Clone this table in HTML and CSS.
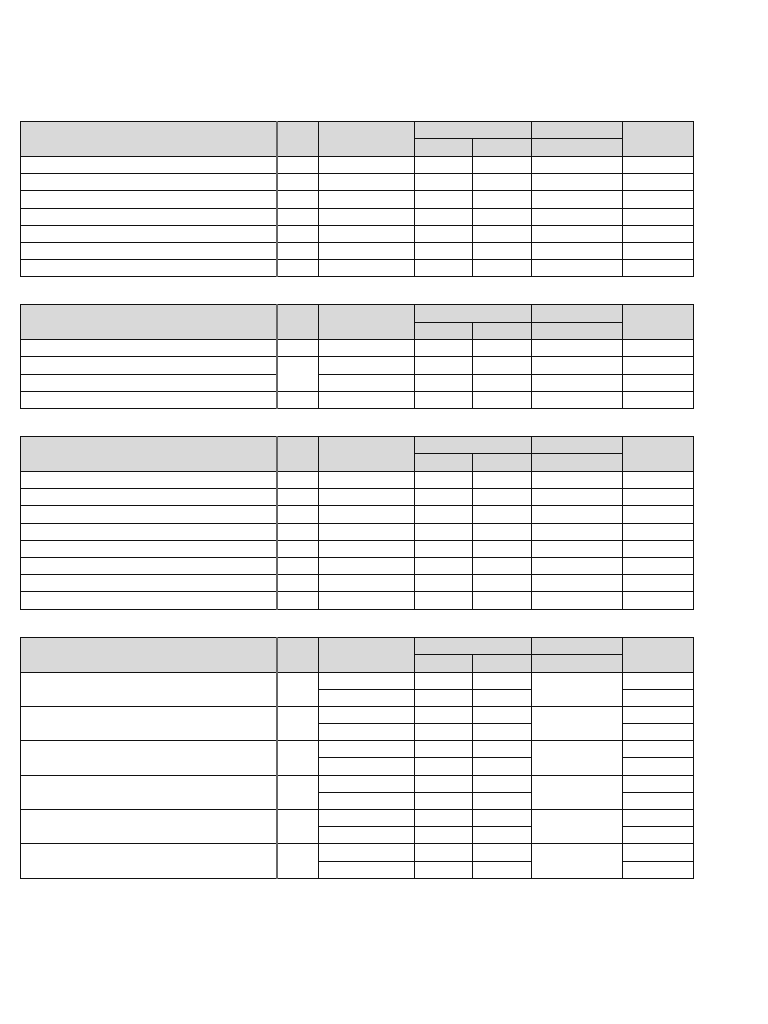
FILE: index.html
```html
<!DOCTYPE html>
<html lang="en">
<head>
<meta charset="utf-8">
<title>Sheet</title>
<link rel="stylesheet" href="styles.css">
</head>
<body>
<main class="sheet">

<table class="grid">
  <colgroup>
    <col class="w1"><col class="w2"><col class="w3"><col class="w4"><col class="w5"><col class="w6"><col class="w7">
  </colgroup>
  <thead>
    <tr class="h1"><th rowspan="2"></th><th rowspan="2" class="c2"></th><th rowspan="2"></th><th colspan="2"></th><th></th><th rowspan="2"></th></tr>
    <tr class="h2"><th></th><th></th><th></th></tr>
  </thead>
  <tbody>
    <tr><td></td><td class="c2"></td><td></td><td></td><td></td><td></td><td></td></tr>
    <tr><td></td><td class="c2"></td><td></td><td></td><td></td><td></td><td></td></tr>
    <tr><td></td><td class="c2"></td><td></td><td></td><td></td><td></td><td></td></tr>
    <tr><td></td><td class="c2"></td><td></td><td></td><td></td><td></td><td></td></tr>
    <tr><td></td><td class="c2"></td><td></td><td></td><td></td><td></td><td></td></tr>
    <tr><td></td><td class="c2"></td><td></td><td></td><td></td><td></td><td></td></tr>
    <tr><td></td><td class="c2"></td><td></td><td></td><td></td><td></td><td></td></tr>
  </tbody>
</table>

<table class="grid">
  <colgroup>
    <col class="w1"><col class="w2"><col class="w3"><col class="w4"><col class="w5"><col class="w6"><col class="w7">
  </colgroup>
  <thead>
    <tr class="h1"><th rowspan="2"></th><th rowspan="2" class="c2"></th><th rowspan="2"></th><th colspan="2"></th><th></th><th rowspan="2"></th></tr>
    <tr class="h2"><th></th><th></th><th></th></tr>
  </thead>
  <tbody>
    <tr><td></td><td class="c2"></td><td></td><td></td><td></td><td></td><td></td></tr>
    <tr><td></td><td class="c2" rowspan="2"></td><td></td><td></td><td></td><td></td><td></td></tr>
    <tr><td></td><td></td><td></td><td></td><td></td><td></td></tr>
    <tr><td></td><td class="c2"></td><td></td><td></td><td></td><td></td><td></td></tr>
  </tbody>
</table>

<table class="grid">
  <colgroup>
    <col class="w1"><col class="w2"><col class="w3"><col class="w4"><col class="w5"><col class="w6"><col class="w7">
  </colgroup>
  <thead>
    <tr class="h1"><th rowspan="2"></th><th rowspan="2" class="c2"></th><th rowspan="2"></th><th colspan="2"></th><th></th><th rowspan="2"></th></tr>
    <tr class="h2"><th></th><th></th><th></th></tr>
  </thead>
  <tbody>
    <tr><td></td><td class="c2"></td><td></td><td></td><td></td><td></td><td></td></tr>
    <tr><td></td><td class="c2"></td><td></td><td></td><td></td><td></td><td></td></tr>
    <tr><td></td><td class="c2"></td><td></td><td></td><td></td><td></td><td></td></tr>
    <tr><td></td><td class="c2"></td><td></td><td></td><td></td><td></td><td></td></tr>
    <tr><td></td><td class="c2"></td><td></td><td></td><td></td><td></td><td></td></tr>
    <tr><td></td><td class="c2"></td><td></td><td></td><td></td><td></td><td></td></tr>
    <tr><td></td><td class="c2"></td><td></td><td></td><td></td><td></td><td></td></tr>
    <tr><td></td><td class="c2"></td><td></td><td></td><td></td><td></td><td></td></tr>
  </tbody>
</table>

<table class="grid">
  <colgroup>
    <col class="w1"><col class="w2"><col class="w3"><col class="w4"><col class="w5"><col class="w6"><col class="w7">
  </colgroup>
  <thead>
    <tr class="h1"><th rowspan="2"></th><th rowspan="2" class="c2"></th><th rowspan="2"></th><th colspan="2"></th><th></th><th rowspan="2"></th></tr>
    <tr class="h2"><th></th><th></th><th></th></tr>
  </thead>
  <tbody>
    <tr><td rowspan="2"></td><td rowspan="2" class="c2"></td><td></td><td></td><td></td><td rowspan="2"></td><td></td></tr>
    <tr><td></td><td></td><td></td><td></td></tr>
    <tr><td rowspan="2"></td><td rowspan="2" class="c2"></td><td></td><td></td><td></td><td rowspan="2"></td><td></td></tr>
    <tr><td></td><td></td><td></td><td></td></tr>
    <tr><td rowspan="2"></td><td rowspan="2" class="c2"></td><td></td><td></td><td></td><td rowspan="2"></td><td></td></tr>
    <tr><td></td><td></td><td></td><td></td></tr>
    <tr><td rowspan="2"></td><td rowspan="2" class="c2"></td><td></td><td></td><td></td><td rowspan="2"></td><td></td></tr>
    <tr><td></td><td></td><td></td><td></td></tr>
    <tr><td rowspan="2"></td><td rowspan="2" class="c2"></td><td></td><td></td><td></td><td rowspan="2"></td><td></td></tr>
    <tr><td></td><td></td><td></td><td></td></tr>
    <tr><td rowspan="2"></td><td rowspan="2" class="c2"></td><td></td><td></td><td></td><td rowspan="2"></td><td></td></tr>
    <tr><td></td><td></td><td></td><td></td></tr>
  </tbody>
</table>

</main>
</body>
</html>
```

FILE: styles.css
```css
html, body {
  margin: 0;
  padding: 0;
  background: #ffffff;
  font-family: "Liberation Sans", Arial, sans-serif;
}

.sheet {
  display: flex;
  flex-direction: column;
  align-items: flex-start;
  gap: 27px;
  padding: 121px 0 0 20px;
}

.grid {
  border-collapse: collapse;
  table-layout: fixed;
  width: 673px;
}

.w1 { width: 256px; }
.w2 { width: 42px; }
.w3 { width: 96px; }
.w4 { width: 58px; }
.w5 { width: 59px; }
.w6 { width: 91px; }
.w7 { width: 71px; }

.grid th,
.grid td {
  border: 1px solid #111111;
  padding: 0;
  height: 16.2px;
}

.grid th {
  background: #d9d9d9;
}

.grid .h1 th { height: 16.3px; }
.grid .h2 th { height: 16.7px; }

.grid .c2 {
  border-left: 2px solid #666666;
}
```
